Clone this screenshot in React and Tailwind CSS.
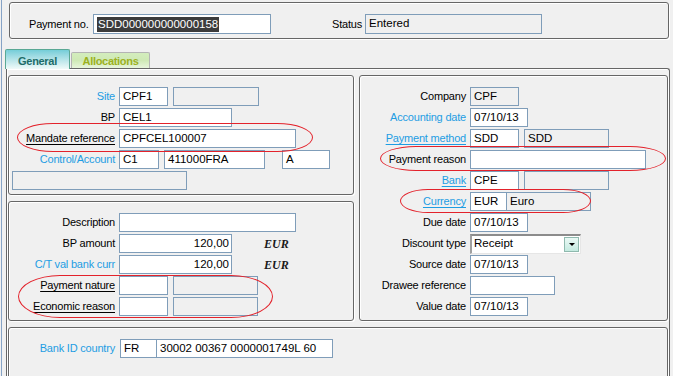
import React from 'react';

const SANS = "font-['Liberation_Sans',Arial,sans-serif]";

function Group({ className = '', children }) {
  return (
    <div className={`border border-[#666666] rounded-[3px] shadow-[inset_1px_1px_0_#ffffff,1px_1px_0_#ffffff] ${className}`}>
      {children}
    </div>
  );
}

function Inp({ w, gray, right, h = 'h-[19px]', extra = '', children }) {
  return (
    <div
      className={`${w} ${h} shrink-0 border border-[#7f9db9] flex items-center px-[3px] text-[11.5px] leading-none text-black whitespace-nowrap overflow-hidden ${gray ? 'bg-[#f0f0f0]' : 'bg-white'} ${right ? 'justify-end pr-[2px]' : ''} ${extra}`}
    >
      {children}
    </div>
  );
}

function Row({ label, blue, u, gap = 'ml-[4px]', children }) {
  return (
    <div className="flex items-center h-[19px]">
      <div className={`w-[106px] shrink-0 text-right text-[11px] tracking-[-0.2px] whitespace-nowrap ${blue ? 'text-[#1e9de3]' : 'text-black'}`}>
        <span className={u ? 'underline underline-offset-[2px]' : ''}>{label}</span>
      </div>
      <div className={`${gap} flex items-center`}>{children}</div>
    </div>
  );
}

function Eur() {
  return <span className="ml-[32px] font-['Liberation_Serif',serif] font-bold italic text-[12px] text-[#1a1a1a]">EUR</span>;
}

export default function App() {
  return (
    <div className={`relative w-[673px] h-[376px] overflow-hidden bg-[#f0f0f0] flex ${SANS}`}>
      <div className="ml-px w-px bg-[#86a3c6] shrink-0" />
      <div className="flex-1 flex flex-col">
        {/* header */}
        <Group className="ml-[7px] mt-[2px] w-[660px] h-[37px] shrink-0 flex items-start pt-[11px] pl-[19px]">
          <div className="w-[64px] h-[20px] flex items-center text-[11px] tracking-[-0.2px]">Payment no.</div>
          <Inp w="w-[178px]" h="h-[20px]" extra="px-[2px]">
            <span className="bg-[#3c3c3c] text-white px-px leading-[15px]">SDD000000000000158</span>
          </Inp>
          <div className="w-[94px] h-[20px] flex items-center justify-end pr-[3px] text-[11px] tracking-[-0.2px]">Status</div>
          <Inp w="w-[177px]" h="h-[20px]" gray>Entered</Inp>
        </Group>

        {/* tabs */}
        <div className="mt-[10px] ml-[3px] h-[19px] flex items-end shrink-0">
          <div className="relative z-10 -mb-px w-[65px] h-[20px] border border-b-0 border-[#5aa894] rounded-t-[2px] bg-linear-to-b from-[#74cdd8] to-[#f0faf9] flex items-center justify-center pt-[3px] text-[11px] font-bold tracking-[-0.3px] text-[#1d6c68]">
            General
          </div>
          <div className="ml-px w-[79px] h-[16px] border border-b-0 border-[#b4b4b4] rounded-t-[2px] bg-linear-to-b from-[#d3edbd] via-[#cfe9b6] to-[#e8f5dc] flex items-center justify-center pt-[1px] text-[11px] font-bold tracking-[-0.3px] text-[#9cb11f]">
            Allocations
          </div>
        </div>

        {/* tab panel */}
        <div className="ml-[4px] w-[664px] flex-1 border-t border-l border-r border-[#666666] rounded-tr-[3px] shadow-[inset_1px_1px_0_#ffffff]">
          <div className="pt-[6px] pl-[1px] flex gap-[5px]">
            <div className="flex flex-col gap-[6px]">
              <Group className="w-[346px] h-[120px] pt-[11px] flex flex-col gap-[2px]">
                <Row label="Site" blue>
                  <Inp w="w-[49px]">CPF1</Inp>
                  <Inp w="w-[86px]" gray extra="ml-[5px]" />
                </Row>
                <Row label="BP" u>
                  <Inp w="w-[113px]">CEL1</Inp>
                </Row>
                <Row label="Mandate reference" u>
                  <Inp w="w-[177px]">CPFCEL100007</Inp>
                </Row>
                <Row label="Control/Account" blue>
                  <Inp w="w-[40px]">C1</Inp>
                  <Inp w="w-[101px]" extra="ml-[5px]">411000FRA</Inp>
                  <Inp w="w-[48px]" extra="ml-[17px]">A</Inp>
                </Row>
                <div className="h-[19px] flex items-center">
                  <Inp w="w-[175px]" gray extra="ml-[3px]" />
                </div>
              </Group>

              <Group className="w-[346px] h-[120px] pt-[11px] flex flex-col gap-[2px]">
                <Row label="Description">
                  <Inp w="w-[177px]" />
                </Row>
                <Row label="BP amount">
                  <Inp w="w-[113px]" right>120,00</Inp>
                  <Eur />
                </Row>
                <Row label="C/T val bank curr" blue>
                  <Inp w="w-[113px]" right>120,00</Inp>
                  <Eur />
                </Row>
                <Row label="Payment nature" u>
                  <Inp w="w-[49px]" />
                  <Inp w="w-[85px]" gray extra="ml-[5px]" />
                </Row>
                <Row label="Economic reason" u>
                  <Inp w="w-[49px]" />
                  <Inp w="w-[85px]" gray extra="ml-[5px]" />
                </Row>
              </Group>
            </div>

            <Group className="w-[309px] h-[246px] pt-[11px] flex flex-col gap-[2px]">
              <Row label="Company">
                <Inp w="w-[49px]" gray>CPF</Inp>
              </Row>
              <Row label="Accounting date" blue>
                <Inp w="w-[58px]">07/10/13</Inp>
              </Row>
              <Row label="Payment method" blue u>
                <Inp w="w-[49px]">SDD</Inp>
                <Inp w="w-[85px]" gray extra="ml-[5px]">SDD</Inp>
              </Row>
              <Row label="Payment reason">
                <Inp w="w-[176px]" />
              </Row>
              <Row label="Bank" blue u>
                <Inp w="w-[49px]">CPE</Inp>
                <Inp w="w-[85px]" gray extra="ml-[5px]" />
              </Row>
              <Row label="Currency" blue u>
                <Inp w="w-[37px]">EUR</Inp>
                <Inp w="w-[85px]" gray extra="-ml-px">Euro</Inp>
              </Row>
              <Row label="Due date">
                <Inp w="w-[58px]">07/10/13</Inp>
              </Row>
              <Row label="Discount type">
                <div className="w-[111px] h-[20px] flex items-center bg-white border-t-2 border-l-2 border-t-[#8c8c8c] border-l-[#a0a0a0] border-b border-r border-b-[#e6e6e6] border-r-[#e6e6e6]">
                  <span className="pl-[2px] text-[11.5px] leading-none">Receipt</span>
                  <div className="ml-auto mr-[1px] w-[15px] h-[15px] border border-[#8fb9ae] bg-linear-to-b from-[#eaf9f5] to-[#c4eae0] flex items-center justify-center">
                    <div className="w-0 h-0 border-l-[3px] border-r-[3px] border-t-[3px] border-l-transparent border-r-transparent border-t-black" />
                  </div>
                </div>
              </Row>
              <Row label="Source date">
                <Inp w="w-[58px]">07/10/13</Inp>
              </Row>
              <Row label="Drawee reference">
                <Inp w="w-[85px]" />
              </Row>
              <Row label="Value date">
                <Inp w="w-[58px]">07/10/13</Inp>
              </Row>
            </Group>
          </div>

          <Group className="mt-[6px] ml-px w-[660px] h-[60px] pt-[11px]">
            <Row label="Bank ID country" blue gap="ml-[5px]">
              <Inp w="w-[37px]">FR</Inp>
              <Inp w="w-[177px]" extra="-ml-px">30002 00367 0000001749L 60</Inp>
            </Row>
          </Group>
        </div>
      </div>

      {/* red highlight ellipses */}
      <div className="absolute left-[17px] top-[123px] w-[296px] h-[29px] rounded-[36px_/_50%] border border-[#e3222b]" />
      <div className="absolute left-[380px] top-[146px] w-[286px] h-[25px] rounded-[36px_/_50%] border border-[#e3222b]" />
      <div className="absolute left-[400px] top-[189px] w-[191px] h-[24px] rounded-[28px_/_50%] border border-[#e3222b]" />
      <div className="absolute left-[18px] top-[275px] w-[255px] h-[43px] rounded-[42px_/_50%] border border-[#e3222b]" />
    </div>
  );
}
